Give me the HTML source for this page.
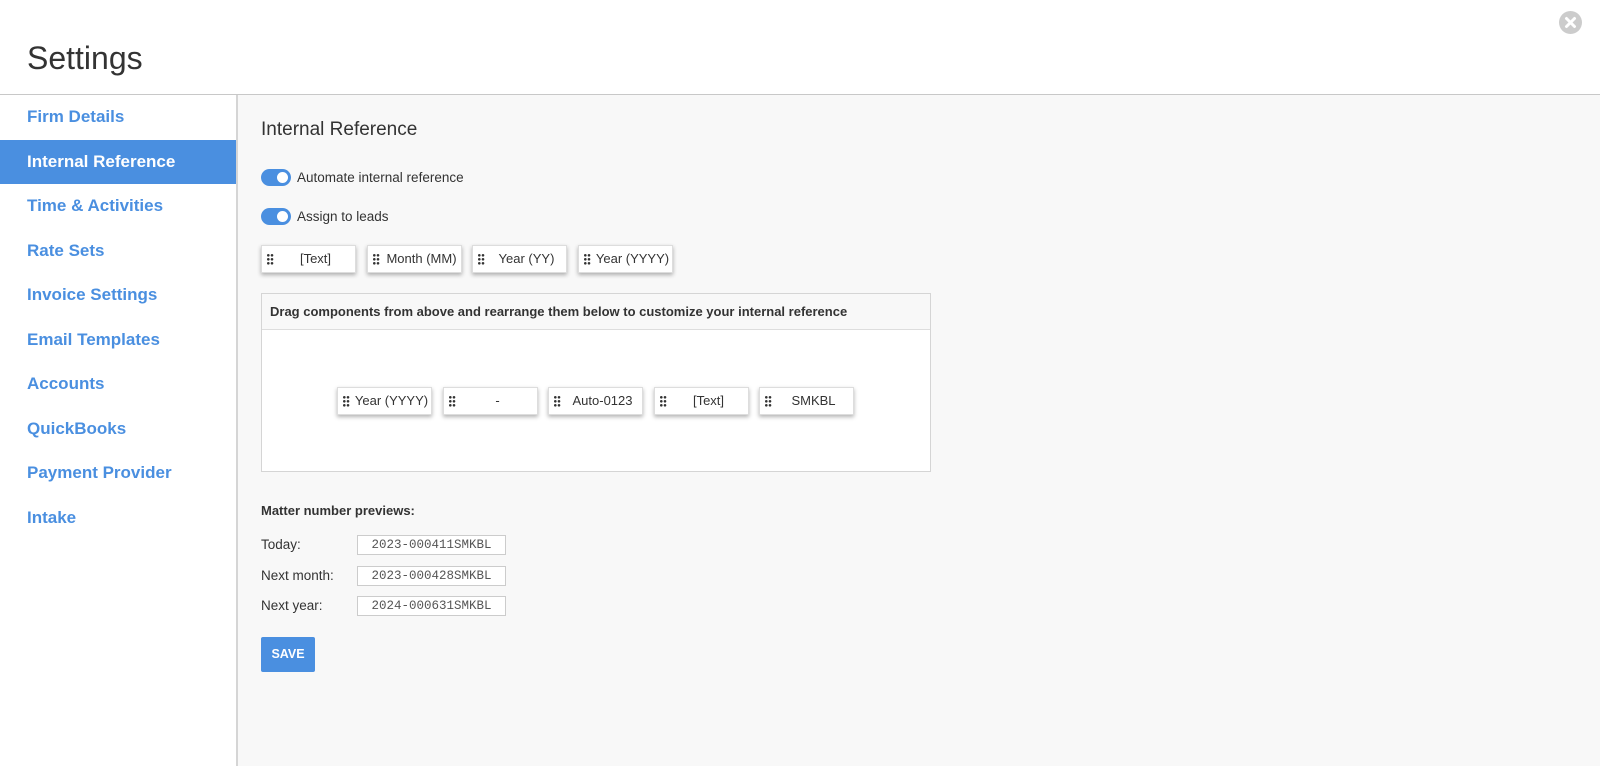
<!DOCTYPE html>
<html><head><style>
*{box-sizing:border-box;margin:0;padding:0}
html,body{width:1600px;height:766px;overflow:hidden;background:#fff}
body{font-family:"Liberation Sans",sans-serif;color:#333;position:relative}
.hdr{position:absolute;left:0;top:0;width:1600px;height:95px;border-bottom:1px solid #c8c8c8;background:#fff}
.hdr h1{position:absolute;left:27px;top:40px;font-size:32px;font-weight:normal;color:#333;line-height:36px}
.close{position:absolute;left:1559px;top:11px;width:23px;height:23px;border-radius:50%;background:#ccc}
.side{position:absolute;left:0;top:95px;width:238px;height:671px;border-right:2px solid #d5d5d5;background:#fff}
.side div{height:44.5px;line-height:44.5px;padding-left:27px;font-size:17px;font-weight:bold;color:#4a8fe0}
.side div.act{background:#4a8fe0;color:#fff}
.main{position:absolute;left:238px;top:95px;width:1362px;height:671px;background:#f8f8f8}
.abs{position:absolute}
.tog{position:absolute;width:30px;height:17px;border-radius:9px;background:#4a8fe0}
.tog::after{content:"";position:absolute;right:3px;top:3px;width:11px;height:11px;border-radius:50%;background:#fff}
.lbl{position:absolute;font-size:13.5px;color:#333;line-height:16px}
.chip{position:absolute;width:95px;height:28px;background:#fff;border:1px solid #ddd;box-shadow:0 2px 4px rgba(0,0,0,.3);font-size:13px;line-height:26px;text-align:center;padding-left:14px;color:#333}
.chip svg{position:absolute;left:5px;top:8px}
.box{position:absolute;left:23px;top:198px;width:670px;height:179px;border:1px solid #d5d5d5;background:#fff}
.box .bh{height:36px;border-bottom:1px solid #ddd;background:#f8f8f8;font-size:13px;font-weight:bold;line-height:35px;padding-left:8px}
.inp{position:absolute;left:119px;width:149px;height:20px;border:1px solid #ccc;background:#fff;font-family:"Liberation Mono",monospace;font-size:12.5px;line-height:18px;text-align:center;color:#555}
.save{position:absolute;left:23px;top:542px;width:54px;height:35px;background:#4a8fe0;color:#fff;font-weight:bold;font-size:12.5px;text-align:center;line-height:35px;border-radius:2px}
</style></head><body>
<svg width="0" height="0" style="position:absolute"><defs><g id="d" fill="#333"><circle cx="1.3" cy="1.3" r="1.3"/><circle cx="5" cy="1.3" r="1.3"/><circle cx="1.3" cy="5.3" r="1.3"/><circle cx="5" cy="5.3" r="1.3"/><circle cx="1.3" cy="9.3" r="1.3"/><circle cx="5" cy="9.3" r="1.3"/></g></defs></svg>
<div class="hdr"><h1>Settings</h1><div class="close"><svg width="23" height="23" viewBox="0 0 23 23"><path d="M7.5 7.5L15.5 15.5M15.5 7.5L7.5 15.5" stroke="#fff" stroke-width="3" stroke-linecap="round"/></svg></div></div>
<div class="side">
<div>Firm Details</div><div class="act">Internal Reference</div><div>Time &amp; Activities</div><div>Rate Sets</div><div>Invoice Settings</div><div>Email Templates</div><div>Accounts</div><div>QuickBooks</div><div>Payment Provider</div><div>Intake</div>
</div>
<div class="main">
<div class="abs" style="left:23px;top:24px;font-size:19px;color:#333">Internal Reference</div>
<div class="tog" style="left:23px;top:74px"></div><div class="lbl" style="left:59px;top:75px">Automate internal reference</div>
<div class="tog" style="left:23px;top:113px"></div><div class="lbl" style="left:59px;top:114px">Assign to leads</div>
<div class="chip" style="left:23px;top:150px"><svg width="7" height="11"><use href="#d"/></svg>[Text]</div>
<div class="chip" style="left:129px;top:150px"><svg width="7" height="11"><use href="#d"/></svg>Month (MM)</div>
<div class="chip" style="left:234px;top:150px"><svg width="7" height="11"><use href="#d"/></svg>Year (YY)</div>
<div class="chip" style="left:340px;top:150px"><svg width="7" height="11"><use href="#d"/></svg>Year (YYYY)</div>
<div class="box"><div class="bh">Drag components from above and rearrange them below to customize your internal reference</div></div>
<div class="chip" style="left:99px;top:292px"><svg width="7" height="11"><use href="#d"/></svg>Year (YYYY)</div>
<div class="chip" style="left:205px;top:292px"><svg width="7" height="11"><use href="#d"/></svg>-</div>
<div class="chip" style="left:310px;top:292px"><svg width="7" height="11"><use href="#d"/></svg>Auto-0123</div>
<div class="chip" style="left:416px;top:292px"><svg width="7" height="11"><use href="#d"/></svg>[Text]</div>
<div class="chip" style="left:521px;top:292px"><svg width="7" height="11"><use href="#d"/></svg>SMKBL</div>
<div class="lbl" style="left:23px;top:408px;font-weight:bold;font-size:13px">Matter number previews:</div>
<div class="lbl" style="left:23px;top:442px">Today:</div><div class="inp" style="top:440px">2023-000411SMKBL</div>
<div class="lbl" style="left:23px;top:473px">Next month:</div><div class="inp" style="top:471px">2023-000428SMKBL</div>
<div class="lbl" style="left:23px;top:503px">Next year:</div><div class="inp" style="top:501px">2024-000631SMKBL</div>
<div class="save">SAVE</div>
</div>
</body></html>
